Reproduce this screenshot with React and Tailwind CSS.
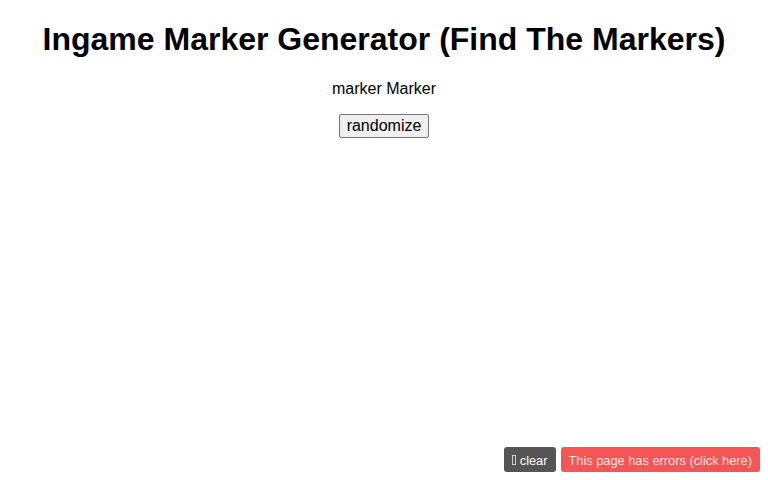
import React from 'react';

const App = () => {
  return (
    <div className="min-h-[480px] bg-white text-black font-['Liberation_Sans',Arial,sans-serif]">
      <h1 className="text-[32px] leading-[37px] font-bold text-center pt-[21px] pb-[22px]">
        Ingame Marker Generator (Find The Markers)
      </h1>
      <p className="text-center text-base leading-[18px]">marker Marker</p>
      <p className="text-center mt-4">
        <button className="text-base leading-[18px] px-[7px] py-[2px] bg-[#efefef] border border-[#767676] rounded-[2px]">
          randomize
        </button>
      </p>

      {/* error overlay buttons */}
      <div className="fixed right-2 bottom-2 flex gap-[5px] text-[12.8px] leading-[15px]">
        <button className="flex items-center bg-[#555555] text-white px-2 pt-[5.5px] pb-[4.5px] rounded-[3px]">
          <span className="inline-block w-[4px] h-[10px] border border-[#d0d0d0] mr-[4px]" />
          clear
        </button>
        <button className="bg-[#f55555] text-[#ffe5e5] px-2 pt-[5.5px] pb-[4.5px] rounded-[3px]">
          This page has errors (click here)
        </button>
      </div>
    </div>
  );
};

export default App;
